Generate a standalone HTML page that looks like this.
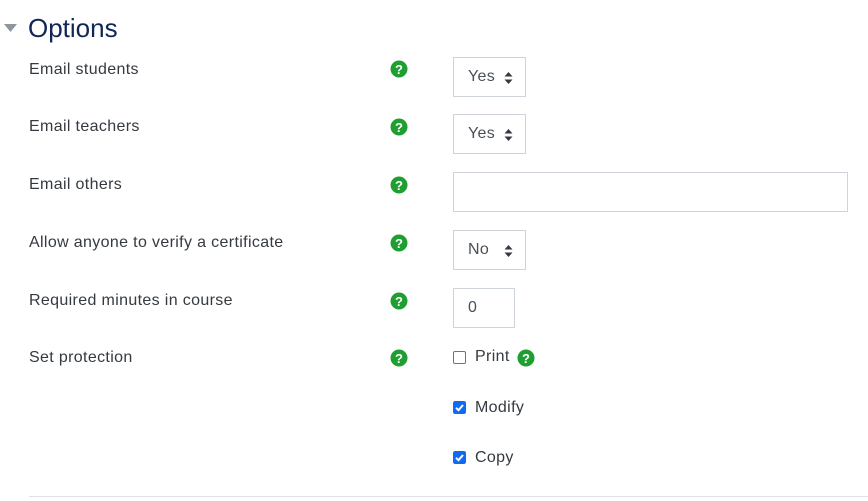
<!DOCTYPE html>
<html><head><style>
body{margin:0;width:868px;height:501px;background:#fff;font-family:"Liberation Sans",sans-serif;color:#343a40;position:relative;overflow:hidden}
.a{position:absolute}
.lbl{position:absolute;left:29px;font-size:16px;letter-spacing:0.35px}
.h{position:absolute;left:390px;width:18px;height:18px}
.sel{position:absolute;left:453px;width:71px;height:38px;border:1px solid #ced4da;font-size:16px;color:#495057;letter-spacing:0.3px}
.sel span{position:absolute;left:14px;top:10px}
.sel svg{position:absolute;left:50px;top:14px}
.inp{position:absolute;left:453px;height:38px;border:1px solid #ced4da;font-size:16px;color:#495057}
.cb{position:absolute;left:453px;width:13px;height:13px;border-radius:2px}
.ct{position:absolute;left:475px;font-size:16px;letter-spacing:0.35px}
</style></head><body>
<svg class="a" style="left:4px;top:24px" width="14" height="9"><path d="M0 0H13L6.5 8Z" fill="#8f959e"/></svg>
<div class="a" style="left:28px;top:13px;font-size:26px;color:#0f2656">Options</div>

<div class="lbl" style="top:61px">Email students</div>
<div class="lbl" style="top:118px">Email teachers</div>
<div class="lbl" style="top:176px">Email others</div>
<div class="lbl" style="top:234px">Allow anyone to verify a certificate</div>
<div class="lbl" style="top:292px">Required minutes in course</div>
<div class="lbl" style="top:349px">Set protection</div>

<svg width="0" height="0" style="position:absolute"><defs><g id="q"><circle cx="9" cy="9" r="8.5" fill="#1f9e32"/><text x="9" y="14" text-anchor="middle" font-family="Liberation Sans" font-weight="bold" font-size="13" fill="#fff">?</text></g></defs></svg>
<svg class="h" style="top:60px"><use href="#q"/></svg>
<svg class="h" style="top:118px"><use href="#q"/></svg>
<svg class="h" style="top:176px"><use href="#q"/></svg>
<svg class="h" style="top:234px"><use href="#q"/></svg>
<svg class="h" style="top:292px"><use href="#q"/></svg>
<svg class="h" style="top:349px"><use href="#q"/></svg>
<svg class="h" style="top:349px;left:517px"><use href="#q"/></svg>

<div class="sel" style="top:57px"><span>Yes</span><svg width="9" height="12"><path d="M4.5 0L8.5 4.5H0.5Z M4.5 12L8.5 7.5H0.5Z" fill="#343a40"/></svg></div>
<div class="sel" style="top:114px"><span>Yes</span><svg width="9" height="12"><path d="M4.5 0L8.5 4.5H0.5Z M4.5 12L8.5 7.5H0.5Z" fill="#343a40"/></svg></div>
<div class="inp" style="top:172px;width:393px"></div>
<div class="sel" style="top:230px"><span>No</span><svg width="9" height="12"><path d="M4.5 0L8.5 4.5H0.5Z M4.5 12L8.5 7.5H0.5Z" fill="#343a40"/></svg></div>
<div class="inp" style="top:288px;width:60px"><span class="a" style="left:14px;top:10px">0</span></div>

<div class="cb" style="top:351px;border:1px solid #6c757d;width:11px;height:11px"></div>
<div class="ct" style="top:348px">Print</div>
<svg class="cb" style="top:401px" viewBox="0 0 13 13"><rect width="13" height="13" rx="2" fill="#0f6cf0"/><path d="M3 6.8L5.5 9.2L10 4" stroke="#fff" stroke-width="2" fill="none"/></svg>
<div class="ct" style="top:399px">Modify</div>
<svg class="cb" style="top:451px" viewBox="0 0 13 13"><rect width="13" height="13" rx="2" fill="#0f6cf0"/><path d="M3 6.8L5.5 9.2L10 4" stroke="#fff" stroke-width="2" fill="none"/></svg>
<div class="ct" style="top:449px">Copy</div>

<div class="a" style="left:29px;top:496px;width:839px;height:1px;background:#dee2e6"></div>
</body></html>
